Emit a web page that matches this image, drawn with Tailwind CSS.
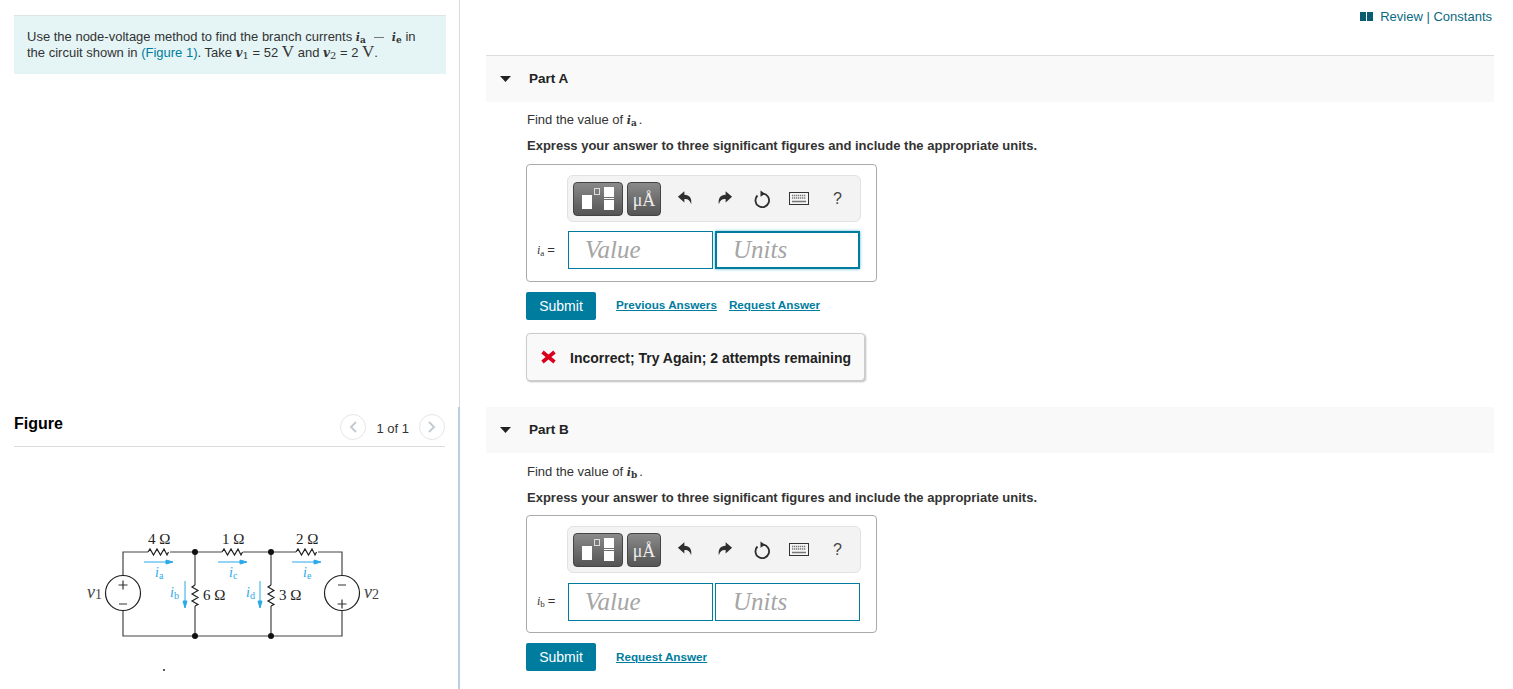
<!DOCTYPE html>
<html><head><meta charset="utf-8"><script src="https://cdn.jsdelivr.net/npm/@tailwindcss/browser@4"></script></head>
<body class="bg-white overflow-hidden font-['Liberation_Sans',Arial,sans-serif] text-[#333] text-[13px]">
<div class="flex w-[1513px] h-[689px] overflow-hidden">
  <div class="relative w-[460px] h-[689px] shrink-0 border-r border-[#d6d9dd]">
    <div class="absolute right-[-1px] top-[407px] w-[2px] h-[282px] bg-[#b9cee2]"></div>
    <div class="ml-[14px] mt-[15px] w-[432px] h-[59px] bg-[#e5f5f6] border-t border-[#dfe5e7] pl-[13px] pt-[13px] leading-[16px]">
      <div class="h-[15px] whitespace-nowrap flex items-baseline">Use the node-voltage method to find the branch currents&nbsp;<b class="font-['DejaVu_Serif',serif] italic text-[11px]">i<sub class="not-italic text-[9px] bottom-[-2px]">a</sub></b><span class="inline-block w-[10px] h-[1px] bg-[#777] mx-[8px] self-center mt-[1px]"></span><b class="font-['DejaVu_Serif',serif] italic text-[11px]">i<sub class="not-italic text-[9px] bottom-[-2px]">e</sub></b>&nbsp;in</div>
      <div class="h-[16px] whitespace-nowrap">the circuit shown in <span class="text-[#007c9f]">(Figure 1)</span>. Take <b class="font-['DejaVu_Serif',serif] italic text-[12px]">v<sub class="not-italic font-normal text-[10px] bottom-[-2px]">1</sub></b> = 52 <span class="font-['Liberation_Serif',serif] text-[17px] font-medium">V</span> and <b class="font-['DejaVu_Serif',serif] italic text-[12px]">v<sub class="not-italic font-normal text-[10px] bottom-[-2px]">2</sub></b> = 2 <span class="font-['Liberation_Serif',serif] text-[17px] font-medium">V</span>.</div>
    </div>
    <div class="ml-[14px] mt-[338px] w-[431px] h-[35px] border-b border-[#d9dcde] flex items-start justify-between">
      <div class="text-[16px] font-bold text-black leading-[20px] mt-[2px]">Figure</div>
      <div class="flex items-start h-[26px] mt-[2px] gap-[10px]">
        <div class="w-[26px] h-[26px] rounded-full border border-[#e6e6e6] flex items-center justify-center"><svg width="10" height="14" viewBox="0 0 10 14"><path d="M8 2 3 7l5 5" fill="none" stroke="#c4cbd2" stroke-width="2"/></svg></div>
        <span class="mt-[7px] leading-[16px]">1 of 1</span>
        <div class="w-[26px] h-[26px] rounded-full border border-[#e6e6e6] flex items-center justify-center"><svg width="10" height="14" viewBox="0 0 10 14"><path d="M2 2l5 5-5 5" fill="none" stroke="#c4cbd2" stroke-width="2"/></svg></div>
      </div>
    </div>
    <svg class="block mt-[73px]" width="459" height="169" viewBox="0 520 459 169" font-family="Liberation Serif, serif" font-size="13" fill="#222">
      <g fill="none" stroke="#444" stroke-width="1.2">
        <path d="M123 575V552H148M170 552H222M243 552H296M318 552H342V575M342 611V636H123V611M195 552V585M195 606V636M271 552V585M271 606V636"/>
        <path d="M148 552l2-3 3.500 6 3.500-6 3.500 6 3.500-6 3 6 1.500-3M222 552l2-3 3.500 6 3.500-6 3.500 6 3.500-6 3 6 1.500-3M296 552l2-3 3.500 6 3.500-6 3.500 6 3.500-6 3 6 1.500-3" stroke="#222"/>
        <path d="M195 585l-3 2 6 3.500-6 3.500 6 3.500-6 3.500 6 3.500-3 1.500M271 585l-3 2 6 3.500-6 3.500 6 3.500-6 3.500 6 3.500-3 1.500" stroke="#222"/>
        <circle cx="123" cy="593" r="17.500" stroke="#222"/><circle cx="342" cy="593" r="17.500" stroke="#222"/>
        <path d="M118.500 585h9M123 580.500v9M119 604h8M338 585h8M337.500 604h9M342 599.500v9" stroke="#333"/>
      </g>
      <g fill="#111"><circle cx="195" cy="552" r="3"/><circle cx="271" cy="552" r="3"/><circle cx="195" cy="636" r="3"/><circle cx="271" cy="636" r="3"/><circle cx="164" cy="670" r="0.900"/></g>
      <g stroke="#2aa9e8" stroke-width="1" fill="#2aa9e8">
        <path d="M144 562h24"/><path d="M166 560l7 2-7 2z"/><path d="M218 562h24"/><path d="M240 560l7 2-7 2z"/><path d="M292 562h24"/><path d="M314 560l7 2-7 2z"/>
        <path d="M185 581v22"/><path d="M183 601l2 7 2-7z"/><path d="M260 581v22"/><path d="M258 601l2 7 2-7z"/>
      </g>
      <g font-size="15">
      <text x="148" y="544">4 Ω</text><text x="222" y="544">1 Ω</text><text x="296" y="544">2 Ω</text>
      <text x="203" y="600">6 Ω</text><text x="279" y="600">3 Ω</text>
      </g>
      <g fill="#2aa9e8" font-style="italic" font-size="14">
        <text x="155" y="577">i<tspan font-style="normal" font-size="10" dy="2">a</tspan></text>
        <text x="229" y="577">i<tspan font-style="normal" font-size="10" dy="2">c</tspan></text>
        <text x="303" y="577">i<tspan font-style="normal" font-size="10" dy="2">e</tspan></text>
        <text x="170" y="597">i<tspan font-style="normal" font-size="10" dy="2">b</tspan></text>
        <text x="246" y="597">i<tspan font-style="normal" font-size="10" dy="2">d</tspan></text>
      </g>
      <text x="87" y="598" font-style="italic" font-size="18" fill="#444">v<tspan font-style="normal" font-size="14" dy="1">1</tspan></text>
      <text x="364" y="598" font-style="italic" font-size="18" fill="#444">v<tspan font-style="normal" font-size="14" dy="1">2</tspan></text>
    </svg>
  </div>

  <div class="ml-[26px] w-[1008px] h-[689px] shrink-0">
    <div class="h-[55px] flex justify-end pt-[9px] pr-[2px] leading-[15px] text-[#0a6a82]">
      <div class="flex items-center h-[15px] gap-[7px]">
        <svg width="13" height="9" viewBox="0 0 13 9"><path d="M0 0h6v9H0zM7 0h6v9H7z" fill="#0b5c70"/></svg>
        <span>Review | Constants</span>
      </div>
    </div>

    <section class="h-[352px] border-t border-[#dcdcdc]">
      <div class="h-[46px] bg-[#f9f9f9] flex items-center font-bold text-[#222] text-[13.500px]">
        <svg class="ml-[14px]" width="11" height="6" viewBox="0 0 11 6"><path d="M0 0h11L5.500 6z" fill="#222"/></svg>
        <span class="ml-[18px] mt-[1px]">Part A</span>
      </div>
      <div class="ml-[40px]">
        <div class="mt-[10px] h-[16px] leading-[16px] pl-[1px]">Find the value of <b class="font-['DejaVu_Serif',serif] italic text-[11px]">i<sub class="not-italic text-[9px] bottom-[-2px]">a</sub></b><span class="ml-[2px]">.</span></div>
        <div class="mt-[10px] h-[16px] leading-[16px] font-bold pl-[1px]">Express your answer to three significant figures and include the appropriate units.</div>
        <div class="mt-[10px] w-[351px] h-[118px] border border-[#aaa] rounded-[4px] relative">
          <div class="absolute left-[40px] top-[10px] w-[294px] h-[47px] bg-[#f3f3f3] border border-[#e2e2e2] rounded-[6px] flex items-center pl-[5px]">
            <div class="w-[50px] h-[34px] rounded-[4px] bg-gradient-to-b from-[#8a8a8a] to-[#555] border border-[#444] flex items-center justify-center gap-[2px]">
              <div class="w-[10px] h-[14px] bg-white self-end mb-[6px]"></div>
              <div class="w-[6px] h-[7px] border border-[#ddd] self-start mt-[5px]"></div>
              <div class="flex flex-col gap-[1px] ml-[2px]"><div class="w-[10px] h-[10px] bg-white"></div><div class="w-[10px] h-[1px] bg-white"></div><div class="w-[10px] h-[10px] bg-white"></div></div>
            </div>
            <div class="ml-[4px] w-[34px] h-[34px] rounded-[4px] bg-gradient-to-b from-[#8a8a8a] to-[#555] border border-[#444] text-[#eee] font-['Liberation_Serif',serif] text-[18px] flex items-center justify-center leading-none pt-[3px]">μÅ</div>
            <svg class="ml-[16px]" width="17" height="17" viewBox="0 0 15 15"><path d="M6.500 1 0.800 6l5.700 5V8c3-.3 4.800.8 6 4.500.800-5-1.300-8-6-8.200z" fill="#2f2f2f"/></svg>
            <svg class="ml-[22px]" width="17" height="17" viewBox="0 0 15 15"><path d="M8.500 1 14.200 6l-5.700 5V8c-3-.3-4.800.8-6 4.500-.8-5 1.300-8 6-8.200z" fill="#2f2f2f"/></svg>
            <svg class="ml-[20px]" width="18" height="18" viewBox="0 0 18 18"><path d="M10 3.600A6.800 6.800 0 1 1 4.500 5.500" fill="none" stroke="#2f2f2f" stroke-width="1.800"/><path d="M7.500 0.500 12 3.800 7.500 6.800z" fill="#2f2f2f"/></svg>
            <svg class="ml-[18px]" width="20" height="13" viewBox="0 0 20 13"><rect x="0.500" y="0.500" width="19" height="12" fill="#f5f5f5" stroke="#333"/><path d="M3 3.500h14M3 6h14" stroke="#777" stroke-width="1.300" stroke-dasharray="1.300 .7"/><path d="M3 9.500h14" stroke="#777" stroke-width="1.500"/></svg>
            <span class="ml-[24px] text-[16px] text-[#444]">?</span>
          </div>
          <div class="absolute left-[10px] top-[78px] leading-[14px] flex items-center w-[30px]"><i class="font-['Liberation_Serif',serif] text-[12px]">i<sub class="not-italic text-[9px] bottom-[-2px]">a</sub></i><span class="ml-[3px]">=</span></div>
          <div class="absolute left-[41px] top-[66px] w-[145px] h-[38px] border border-[#007c9f] pl-[16px] font-['Liberation_Serif',serif] italic text-[25px] text-[#a5a5a5] leading-[36px]">Value</div>
          <div class="absolute left-[188px] top-[66px] w-[145px] h-[38px] border-2 border-[#007c9f] shadow-[0_0_3px_#5fb8d0] pl-[16px] font-['Liberation_Serif',serif] italic text-[25px] text-[#a5a5a5] leading-[34px]">Units</div>
        </div>
        <div class="mt-[10px] h-[28px] flex items-center">
          <div class="w-[70px] h-[28px] bg-[#007c9f] rounded-[2px] text-white text-[14px] flex items-center justify-center">Submit</div>
          <a class="ml-[20px] -mt-[3px] underline text-[#007c9f] font-bold text-[11.700px]">Previous Answers</a>
          <a class="ml-[12px] -mt-[3px] underline text-[#007c9f] font-bold text-[11.700px]">Request Answer</a>
        </div>
        <div class="mt-[13px] w-[339px] h-[48px] border border-[#ccc] rounded-[4px] bg-[#f9f9f9] shadow-[1px_1px_2px_#bbb] flex items-center">
          <svg class="ml-[14px]" width="15" height="14" viewBox="0 0 15 14"><path d="M1.500 2 13.500 12M13.500 2 1.500 12" stroke="#d8001c" stroke-width="3.600"/></svg>
          <span class="ml-[14px] mt-[2px] font-bold text-[#222] text-[14px] whitespace-nowrap">Incorrect; Try Again; 2 attempts remaining</span>
        </div>
      </div>
    </section>

    <section>
      <div class="h-[46px] bg-[#f9f9f9] flex items-center font-bold text-[#222] text-[13.500px]">
        <svg class="ml-[14px]" width="11" height="6" viewBox="0 0 11 6"><path d="M0 0h11L5.500 6z" fill="#222"/></svg>
        <span class="ml-[18px] mt-[1px]">Part B</span>
      </div>
      <div class="ml-[40px]">
        <div class="mt-[11px] h-[16px] leading-[16px] pl-[1px]">Find the value of <b class="font-['DejaVu_Serif',serif] italic text-[11px]">i<sub class="not-italic text-[9px] bottom-[-2px]">b</sub></b><span class="ml-[2px]">.</span></div>
        <div class="mt-[10px] h-[16px] leading-[16px] font-bold pl-[1px]">Express your answer to three significant figures and include the appropriate units.</div>
        <div class="mt-[9px] w-[351px] h-[118px] border border-[#aaa] rounded-[4px] relative">
          <div class="absolute left-[40px] top-[10px] w-[294px] h-[47px] bg-[#f3f3f3] border border-[#e2e2e2] rounded-[6px] flex items-center pl-[5px]">
            <div class="w-[50px] h-[34px] rounded-[4px] bg-gradient-to-b from-[#8a8a8a] to-[#555] border border-[#444] flex items-center justify-center gap-[2px]">
              <div class="w-[10px] h-[14px] bg-white self-end mb-[6px]"></div>
              <div class="w-[6px] h-[7px] border border-[#ddd] self-start mt-[5px]"></div>
              <div class="flex flex-col gap-[1px] ml-[2px]"><div class="w-[10px] h-[10px] bg-white"></div><div class="w-[10px] h-[1px] bg-white"></div><div class="w-[10px] h-[10px] bg-white"></div></div>
            </div>
            <div class="ml-[4px] w-[34px] h-[34px] rounded-[4px] bg-gradient-to-b from-[#8a8a8a] to-[#555] border border-[#444] text-[#eee] font-['Liberation_Serif',serif] text-[18px] flex items-center justify-center leading-none pt-[3px]">μÅ</div>
            <svg class="ml-[16px]" width="17" height="17" viewBox="0 0 15 15"><path d="M6.500 1 0.800 6l5.700 5V8c3-.3 4.800.8 6 4.500.800-5-1.300-8-6-8.200z" fill="#2f2f2f"/></svg>
            <svg class="ml-[22px]" width="17" height="17" viewBox="0 0 15 15"><path d="M8.500 1 14.200 6l-5.700 5V8c-3-.3-4.800.8-6 4.500-.8-5 1.300-8 6-8.200z" fill="#2f2f2f"/></svg>
            <svg class="ml-[20px]" width="18" height="18" viewBox="0 0 18 18"><path d="M10 3.600A6.800 6.800 0 1 1 4.500 5.500" fill="none" stroke="#2f2f2f" stroke-width="1.800"/><path d="M7.500 0.500 12 3.800 7.500 6.800z" fill="#2f2f2f"/></svg>
            <svg class="ml-[18px]" width="20" height="13" viewBox="0 0 20 13"><rect x="0.500" y="0.500" width="19" height="12" fill="#f5f5f5" stroke="#333"/><path d="M3 3.500h14M3 6h14" stroke="#777" stroke-width="1.300" stroke-dasharray="1.300 .7"/><path d="M3 9.500h14" stroke="#777" stroke-width="1.500"/></svg>
            <span class="ml-[24px] text-[16px] text-[#444]">?</span>
          </div>
          <div class="absolute left-[10px] top-[78px] leading-[14px] flex items-center w-[30px]"><i class="font-['Liberation_Serif',serif] text-[12px]">i<sub class="not-italic text-[9px] bottom-[-2px]">b</sub></i><span class="ml-[3px]">=</span></div>
          <div class="absolute left-[41px] top-[67px] w-[145px] h-[38px] border border-[#007c9f] pl-[16px] font-['Liberation_Serif',serif] italic text-[25px] text-[#a5a5a5] leading-[36px]">Value</div>
          <div class="absolute left-[188px] top-[67px] w-[145px] h-[38px] border border-[#007c9f] pl-[17px] font-['Liberation_Serif',serif] italic text-[25px] text-[#a5a5a5] leading-[36px]">Units</div>
        </div>
        <div class="mt-[10px] h-[28px] flex items-center">
          <div class="w-[70px] h-[28px] bg-[#007c9f] rounded-[2px] text-white text-[14px] flex items-center justify-center">Submit</div>
          <a class="ml-[20px] -mt-[1px] underline text-[#007c9f] font-bold text-[11.700px]">Request Answer</a>
        </div>
      </div>
    </section>
  </div>
</div>
</body></html>
